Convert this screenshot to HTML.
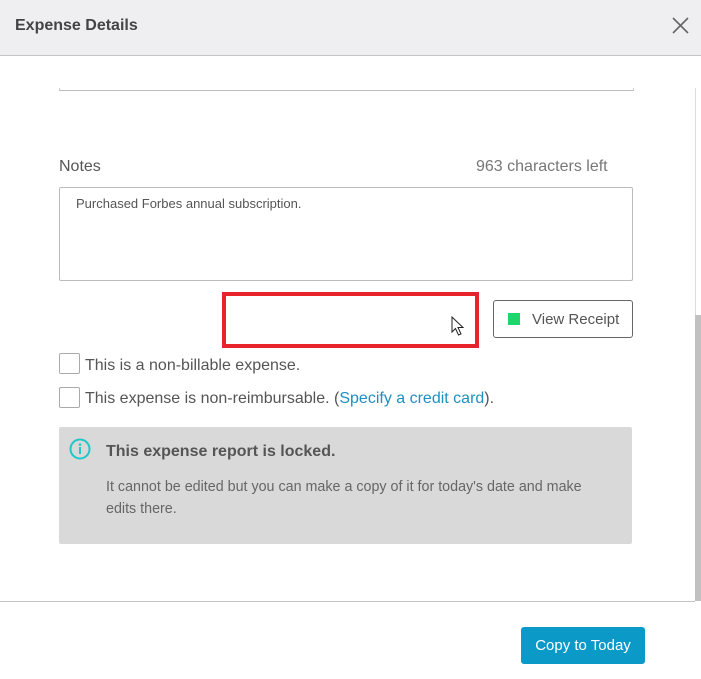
<!DOCTYPE html>
<html><head><style>
body{margin:0;width:701px;height:679px;position:relative;overflow:hidden;background:#fff;font-family:"Liberation Sans",Arial,sans-serif;color:#555}
.a{position:absolute}
</style></head><body>
<div class="a" style="left:0;top:0;width:701px;height:55px;background:#efeff1;border-bottom:1px solid #c4c4c4"></div>
<div class="a" style="left:15px;top:17px;font-size:16px;font-weight:bold;color:#444">Expense Details</div>
<svg class="a" style="left:672px;top:17px" width="17" height="17"><path d="M1 1L16 16M16 1L1 16" stroke="#666" stroke-width="1.6"/></svg>
<div class="a" style="left:59px;top:88px;width:573px;height:2px;border-bottom:1px solid #bbb;border-left:1px solid #ccc;border-right:1px solid #ccc"></div>
<div class="a" style="left:695px;top:88px;width:1px;height:513px;background:#ddd"></div>
<div class="a" style="left:695px;top:315px;width:6px;height:286px;background:#c1c1c1"></div>
<div class="a" style="left:59px;top:158px;font-size:16px;color:#555">Notes</div>
<div class="a" style="left:476px;top:158px;font-size:16px;color:#777">963 characters left</div>
<div class="a" style="left:59px;top:187px;width:572px;height:92px;border:1px solid #bbb;border-radius:2px"></div>
<div class="a" style="left:76px;top:196px;font-size:13px;color:#555">Purchased Forbes annual subscription.</div>
<div class="a" style="left:222px;top:292px;width:249px;height:48px;border:4px solid #e8232b"></div>
<svg class="a" style="left:451px;top:316px" width="14" height="21"><path d="M1 1L1 16L4.5 12.5L7.5 19L10 18L7 11.5L12 11.5Z" fill="#fff" stroke="#222" stroke-width="1"/></svg>
<div class="a" style="left:493px;top:300px;width:138px;height:36px;border:1px solid #666;border-radius:3px"></div>
<div class="a" style="left:508px;top:313px;width:12px;height:12px;background:#1ed66c"></div>
<div class="a" style="left:532px;top:311px;font-size:15px;color:#555">View Receipt</div>
<div class="a" style="left:59px;top:353px;width:19px;height:19px;border:1px solid #aaa;border-radius:2px"></div>
<div class="a" style="left:85px;top:357px;font-size:16px;color:#555">This is a non-billable expense.</div>
<div class="a" style="left:59px;top:387px;width:19px;height:19px;border:1px solid #aaa;border-radius:2px"></div>
<div class="a" style="left:85px;top:390px;font-size:16px;color:#555">This expense is non-reimbursable. (<span style="color:#1e8fc0">Specify a credit card</span>).</div>
<div class="a" style="left:59px;top:427px;width:573px;height:117px;background:#d9d9d9;border-radius:2px"></div>
<svg class="a" style="left:69px;top:438px" width="22" height="22"><circle cx="11" cy="11" r="9.5" fill="none" stroke="#1ec8c8" stroke-width="2"/><circle cx="11" cy="6.5" r="1.3" fill="#1ec8c8"/><rect x="10" y="9" width="2" height="7" fill="#1ec8c8"/></svg>
<div class="a" style="left:106px;top:443px;font-size:16px;font-weight:bold;color:#555">This expense report is locked.</div>
<div class="a" style="left:106px;top:476px;width:505px;font-size:14.3px;line-height:22px;color:#666">It cannot be edited but you can make a copy of it for today's date and make<br>edits there.</div>
<div class="a" style="left:0;top:601px;width:695px;height:1px;background:#c4c4c4"></div>
<div class="a" style="left:521px;top:627px;width:124px;height:37px;background:#0b9ac8;border-radius:3px;color:#fff;font-size:15px;line-height:38px;text-align:center">Copy to Today</div>
</body></html>
